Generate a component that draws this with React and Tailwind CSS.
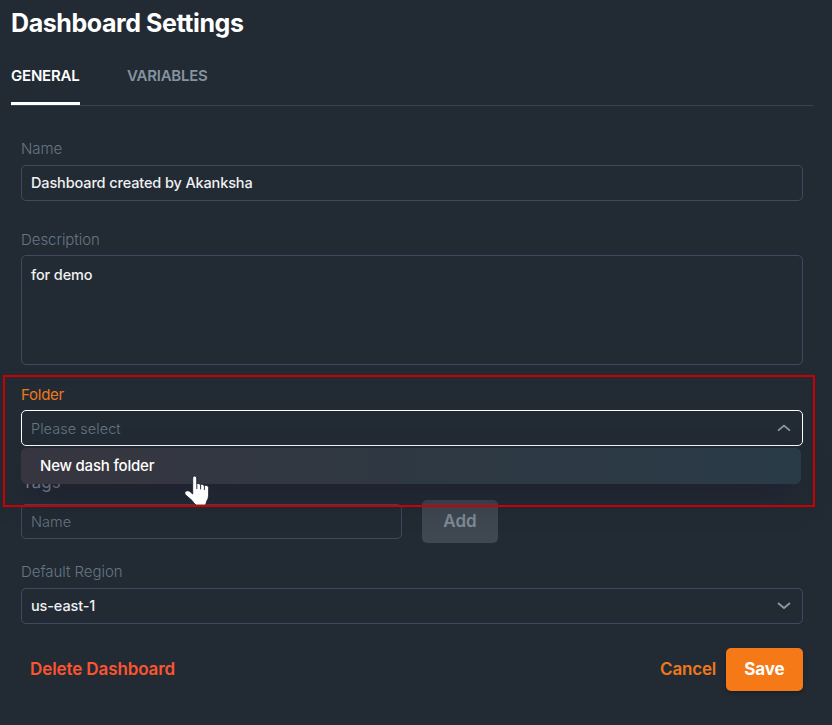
import { useState } from 'react';

function Chevron({ up }) {
  return (
    <svg width="14" height="8" viewBox="0 0 14 8" fill="none" className="shrink-0">
      <path
        d={up ? 'M1 6.6 L7 1.6 L13 6.6' : 'M1 1 L7 6 L13 1'}
        stroke="#8b98a5"
        strokeWidth="1.8"
      />
    </svg>
  );
}

function HandCursor() {
  return (
    <svg width="25" height="30" viewBox="0 0 25 30" className="absolute left-[184px] top-[475px]">
      <path
        d="M8.7 3 Q8.7 1 10.7 1 Q12.7 1 12.7 3 V8.6 Q14.5 8 16.2 9.4 Q18.4 8.6 20 10.4 Q23.4 9.4 24.6 12.2 V20 Q24.4 24 22.8 26 L21.6 30 H12 Q9.6 28 8 25.4 L1.2 19.6 Q0.2 17.6 1.4 16.4 Q3.4 15 5.5 16.2 L8.7 19 Z"
        fill="#fff"
        stroke="#161b2c"
        strokeWidth="0.8"
      />
      <path d="M12.8 8.6 V14 M16.6 9.6 V14.4 M20.4 10.6 V15" stroke="#161b2c" strokeWidth="0.9" />
    </svg>
  );
}

const labelClass = 'block h-5 text-[15px] font-light leading-5 tracking-[-0.05px] text-[#667582]';
const fieldClass =
  'block w-full rounded-[5px] border border-[#40495f] bg-transparent px-[9px] text-[14.5px] font-medium tracking-[-0.13px] text-[#f0f1f2] outline-none';

export default function DashboardSettings() {
  const [name, setName] = useState('Dashboard created by Akanksha');
  const [description, setDescription] = useState('for demo');
  const [tag, setTag] = useState('');

  return (
    <div className="relative h-[725px] w-[832px] overflow-hidden bg-[#222b34] font-['Inter',sans-serif]">
      <h1 className="h-[44px] pl-[11px] pt-[7px] text-[25px] font-bold leading-[32px] tracking-[-0.42px] text-white">
        Dashboard Settings
      </h1>

      {/* Tabs */}
      <div className="ml-[11px] flex h-[62px] w-[802px] gap-[47px] border-b border-[#3a434e] text-[15px] leading-5">
        <button className="h-[61px] w-[69px] border-b-[3px] border-white pt-[5px] text-left font-semibold tracking-[-0.2px] text-white">
          GENERAL
        </button>
        <button className="h-[61px] pt-[2px] font-semibold tracking-[-0.25px] text-[#8593a0]">
          VARIABLES
        </button>
      </div>

      <form className="px-[21px] pt-[33px]" onSubmit={(e) => e.preventDefault()}>
        <div className="w-[782px]">
          <label className={labelClass}>Name</label>
          <input
            className={`${fieldClass} mt-[6px] h-[36px] pb-[2px]`}
            value={name}
            onChange={(e) => setName(e.target.value)}
          />

          <label className={`${labelClass} mt-[29px]`}>Description</label>
          <textarea
            className={`${fieldClass} mt-[5px] h-[110px] resize-none pt-[9px] leading-5`}
            value={description}
            onChange={(e) => setDescription(e.target.value)}
          />

          {/* Folder select with its open menu */}
          <div className="relative z-10 mt-[20px]">
            <label className="block h-5 text-[15px] leading-5 tracking-[-0.25px] text-[#f0781a]">Folder</label>
            <div className="mt-[5px] flex h-[36px] items-center justify-between rounded-[5px] border border-white px-[9px] pr-[11px] text-[14.5px] font-light tracking-[0.05px] text-[#667582]">
              <span className="pt-[2px]">Please select</span>
              <Chevron up />
            </div>
            <div className="absolute left-0 top-[63px] flex h-[36px] w-[780px] items-center rounded-[6px] bg-linear-to-r from-[#373640] via-[#2e3842] to-[#2a3b48] pl-[19px] text-[15px] font-medium tracking-[-0.2px] text-white shadow-[0_14px_34px_-6px_rgba(28,26,43,0.75)]">
              New dash folder
            </div>
          </div>

          {/* Tags */}
          <div className="mt-[26px] h-5 pl-[1px] text-[17px] leading-5 text-[#8593a0]">Tags</div>
          <div className="mt-[8px] flex h-[43px] items-center gap-[20px]">
            <input
              className="h-[35px] w-[381px] rounded-[5px] border border-[#40495f] bg-transparent px-[9px] text-[14.5px] font-light outline-none placeholder:text-[#667582]"
              placeholder="Name"
              value={tag}
              onChange={(e) => setTag(e.target.value)}
            />
            <button className="h-[43px] w-[76px] rounded-[5px] bg-[#3f4851] text-[17px] font-semibold text-[#7e8b97]">
              Add
            </button>
          </div>

          <label className={`${labelClass} mt-[19px]`}>Default Region</label>
          <div className={`${fieldClass} mt-[6px] h-[36px] pr-[11px]`}>
            <div className="flex h-full items-center justify-between">
              us-east-1
              <Chevron />
            </div>
          </div>

          {/* Actions */}
          <div className="mt-[24px] flex h-[43px] items-center text-[17px] font-semibold tracking-[-0.1px]">
            <button className="pl-[9px] text-[#fb5430]">Delete Dashboard</button>
            <button className="ml-auto mr-[10px] tracking-[-0.2px] text-[#f0781a]">Cancel</button>
            <button className="h-[43px] w-[77px] rounded-[5px] bg-[#f57916] font-bold text-white shadow-[0_2px_4px_rgba(0,0,0,0.3)]">
              Save
            </button>
          </div>
        </div>
      </form>

      <div className="absolute inset-0 z-20 pointer-events-none">
        <HandCursor />
        <div className="absolute left-[3px] top-[375px] h-[132px] w-[812px] border-2 border-[#cc0000]" />
      </div>
    </div>
  );
}
